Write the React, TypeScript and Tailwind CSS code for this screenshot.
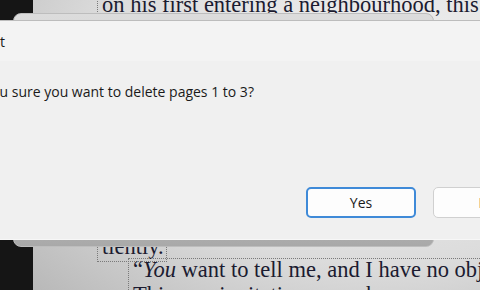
import React from 'react';

// --- page text behind the dialog ---
const PageText: React.FC = () => (
    <div className="flex-1 flex flex-col bg-[radial-gradient(ellipse_75%_120%_at_50%_25%,#f1f1f1_0%,#dcdcdc_55%,#b0b0b0_100%)] text-[#1b1b30] font-['Liberation_Serif',serif] text-[22.5px] leading-[22px] whitespace-nowrap">
        {/* first visible line */}
        <div className="-mt-[6px] ml-[64px] border-l border-dotted border-[#7a7a7a] pl-[4px]">
            on his first entering a neighbourhood, this truth is so well fixed
        </div>

        {/* end of the "impatiently." paragraph */}
        <div className="mt-[220px] ml-[64px] w-[70px] border-l border-r border-b border-dotted border-[#7a7a7a] pl-[4px] pb-[3px]">
            tiently.
        </div>

        {/* next paragraph */}
        <div className="-mt-[4px] ml-[95px] w-[600px] border-l border-t border-dotted border-[#7a7a7a] pl-[4px]">
            <div>“<i>You</i> want to tell me, and I have no objection to hearing it.”</div>
            <div className="mt-[3px]">This was invitation enough.</div>
        </div>
    </div>
);

// --- confirmation dialog ---
const DeleteDialog: React.FC = () => (
    <>
        {/* window shadow / frame behind the dialog */}
        <div className="absolute left-[13px] top-[13px] w-[421px] h-[234px] rounded-[8px] bg-[linear-gradient(180deg,#dcdcdc_0%,#c8c8c8_60%,#a9a9a9_100%)] border border-[#bdbdbd]" />

        <div className="absolute left-[-60px] top-[20px] w-[660px] h-[219px] flex flex-col bg-[#f0f0f0] border-t border-[#bcbcbc] shadow-[0_1px_0_#f7f7f7] font-['Open_Sans',sans-serif] text-[#1a1a1a]">
            <div className="h-[40px] shrink-0 flex items-center pl-[14px] bg-[#f3f3f3] text-[14px]">
                Acrobat
            </div>

            <p className="mt-[21px] pl-[18px] text-[14px] leading-[20px]">
                Are you sure you want to delete pages 1 to 3?
            </p>

            <div className="flex-1" />

            <div className="flex justify-end gap-[17px] pr-[57px] pb-[21px]">
                <button className="w-[110px] h-[31px] rounded-[5px] border-2 border-[#3f8ad8] bg-[#fdfdfd] text-[14px] text-[#1a1a1a]">
                    Yes
                </button>
                <button className="w-[110px] h-[31px] rounded-[5px] border border-[#d0d0d0] bg-[#fdfdfd] text-[14px] text-[#1a1a1a]">
                    No
                </button>
            </div>
        </div>
    </>
);

export default function App() {
    return (
        <div className="relative w-[480px] h-[290px] overflow-hidden flex bg-[#151515]">
            <div className="w-[33px] shrink-0 bg-[#151515]" />
            <PageText />
            <DeleteDialog />
        </div>
    );
}
